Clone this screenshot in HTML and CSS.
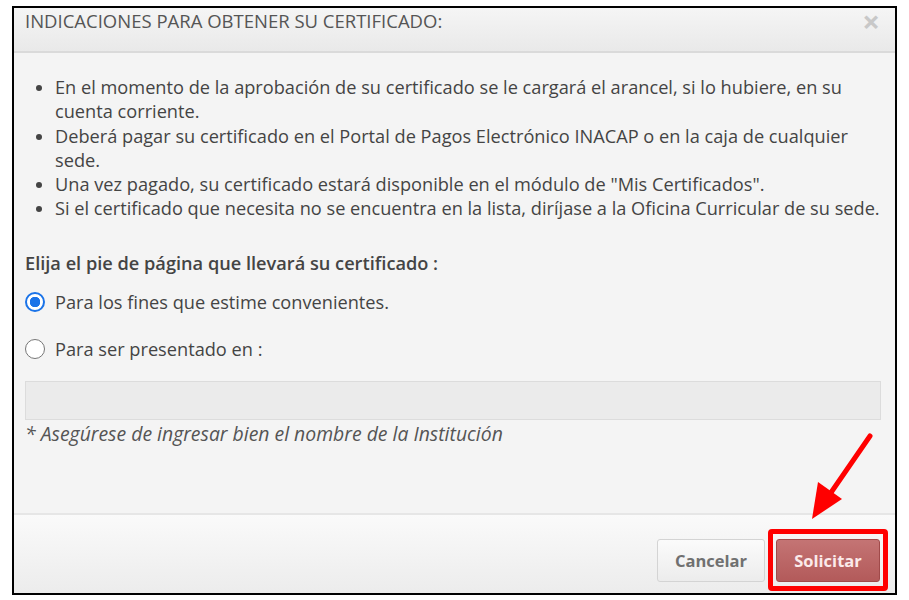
FILE: index.html
```html
<!DOCTYPE html>
<html lang="es">
<head>
<meta charset="utf-8">
<link rel="stylesheet" href="styles.css">
</head>
<body>
<div class="modal">
  <div class="modal-header">
    <h4 class="title">INDICACIONES PARA OBTENER SU CERTIFICADO:</h4>
    <span class="close">&times;</span>
  </div>
  <div class="modal-body">
    <ul class="rules">
      <li>En el momento de la aprobación de su certificado se le cargará el arancel, si lo hubiere, en su cuenta corriente.</li>
      <li>Deberá pagar su certificado en el Portal de Pagos Electrónico INACAP o en la caja de cualquier sede.</li>
      <li>Una vez pagado, su certificado estará disponible en el módulo de "Mis Certificados".</li>
      <li>Si el certificado que necesita no se encuentra en la lista, diríjase a la Oficina Curricular de su sede.</li>
    </ul>
    <p class="question">Elija el pie de página que llevará su certificado :</p>
    <label class="option"><span class="radio checked"></span>Para los fines que estime convenientes.</label>
    <label class="option"><span class="radio"></span>Para ser presentado en :</label>
    <div class="field"></div>
    <p class="note">* Asegúrese de ingresar bien el nombre de la Institución</p>
  </div>
  <div class="modal-footer">
    <button class="btn btn-default">Cancelar</button>
    <span class="highlight"><button class="btn btn-primary">Solicitar</button></span>
  </div>
  <svg class="arrow" width="80" height="100" viewBox="0 0 80 100">
    <line x1="70" y1="4" x2="30" y2="62" stroke="#ff0000" stroke-width="5" stroke-linecap="round"/>
    <polygon points="12,87 18,50 42,67" fill="#ff0000"/>
  </svg>
</div>
</body>
</html>
```
FILE: styles.css
```css
html, body {
  margin: 0;
  padding: 0;
  background: #ffffff;
}
body {
  padding: 6px 0 0 12px;
  font-family: "Open Sans", "DejaVu Sans", sans-serif;
}
.modal {
  position: relative;
  width: 881px;
  height: 585px;
  border: 2px solid #000;
  background: #f4f4f4;
  display: flex;
  flex-direction: column;
}
.modal-header {
  height: 43px;
  border-bottom: 2px solid #dadada;
  background: linear-gradient(#f5f5f5, #e9e9e9);
  display: flex;
  align-items: flex-start;
  justify-content: space-between;
  padding: 0 15px 0 11px;
}
.title {
  margin: 1px 0 0;
  font-size: 18.5px;
  line-height: 24px;
  font-weight: 400;
  color: #555;
  letter-spacing: 0;
}
.close {
  font-size: 31px;
  font-weight: 700;
  color: #c8c8c8;
  line-height: 24px;
  margin-top: 1px;
}
.modal-body {
  flex: 1;
  padding: 22px 14px 0 11px;
  color: #444;
  font-size: 18.2px;
}
.rules {
  margin: 0;
  padding-left: 30px;
  line-height: 24.3px;
  color: #444;
}
.question {
  margin: 30px 0 0;
  font-weight: 600;
  color: #444;
  line-height: 24px;
}
.option {
  display: flex;
  align-items: center;
  height: 24px;
  margin-top: 15px;
  color: #444;
}
.option + .option {
  margin-top: 23px;
}
.radio {
  width: 20px;
  height: 20px;
  border: 1px solid #767676;
  border-radius: 50%;
  background: #fff;
  box-sizing: border-box;
  margin: 0 10px 0 0;
  flex: none;
}
.radio.checked {
  border: 2px solid #1a73e8;
  background: radial-gradient(circle, #1a73e8 0 5px, #fff 5.5px);
}
.field {
  margin-top: 20px;
  height: 39px;
  background: #ebebeb;
  border: 1px solid #dcdcdc;
  box-sizing: border-box;
}
.note {
  margin: 2px 0 0;
  font-size: 19.4px;
  font-style: italic;
  color: #555;
  line-height: 24px;
}
.modal-footer {
  height: 76px;
  border-top: 2px solid #e6e6e6;
  background: linear-gradient(#fafafa, #ececec);
  display: flex;
  justify-content: flex-end;
  align-items: flex-end;
  padding: 0 7px 2px 0;
  gap: 3px;
}
.btn {
  font-family: "Open Sans", "DejaVu Sans", sans-serif;
  font-size: 16.5px;
  font-weight: 700;
  height: 43px;
  border-radius: 3px;
  padding: 0;
  cursor: pointer;
}
.btn-default {
  background: linear-gradient(#fbfbfb, #ececec);
  border: 1px solid #d4d4d4;
  color: #707070;
  width: 108px;
  margin-bottom: 9px;
}
.btn-primary {
  display: block;
  background: linear-gradient(#c47474, #b35a5a);
  border: 1px solid #a04a4a;
  color: #fbeaea;
  width: 104px;
}
.highlight {
  display: block;
  border: 5px solid #ff0000;
  border-radius: 4px;
  padding: 5px 3px 4px;
}
.arrow {
  position: absolute;
  left: 786px;
  top: 424px;
}
```
